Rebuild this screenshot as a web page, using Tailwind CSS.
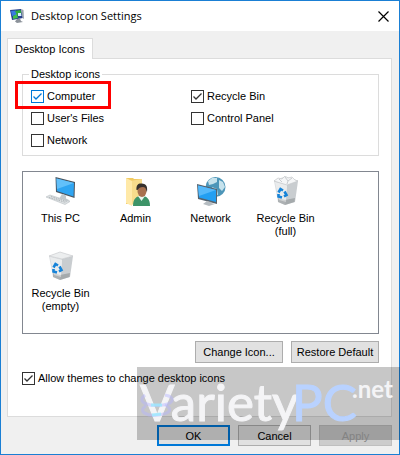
<!DOCTYPE html>
<html lang="en">
  <head>
    <meta charset="UTF-8" />
    <meta name="viewport" content="width=device-width, initial-scale=1" />
    <title>Desktop Icon Settings</title>
    <script src="https://cdn.jsdelivr.net/npm/@tailwindcss/browser@4"></script>
  </head>
  <body class="font-['Liberation_Sans',Arial,sans-serif] text-[11px] leading-[14px] text-black">
    <svg class="hidden">
      <symbol id="bin" viewBox="0 0 32 32">
        <path d="M4 5 17 8 15 29 8 26z" fill="#dcdfe1" />
        <path d="M17 8 28 5 25 26 15 29z" fill="#c9cdd0" />
        <path d="M4 5 15 1 28 5 17 8z" fill="#eceeef" stroke="#c2c5c8" stroke-width=".6" />
        <path d="M8 22 15 24 25 22 24.500 26 15 29 8 26z" fill="#8e9295" opacity=".6" />
        <path d="M5 6 17 9 16 26 9 24z" fill="#fff" opacity=".4" />
        <g fill="none" stroke="#1683d8" stroke-width="2.600">
          <path d="M8.500 16.500 10.500 13 13 14.500" />
          <path d="M14.500 15.500 16.500 19 14 20.500" />
          <path d="M12 21.500 8.500 20.500 8.500 18" />
        </g>
      </symbol>
      <symbol id="tick" viewBox="0 0 13 13">
        <path d="M2.500 6.500 5 9 10.500 3.500" fill="none" stroke="currentColor" stroke-width="1.300" />
      </symbol>
    </svg>

    <div class="relative min-h-screen flex flex-col border border-[#1a7fd4] bg-[#f0f0f0]">
      <!-- title bar -->
      <header class="h-[30px] flex items-center bg-white pl-2 pr-2">
        <svg class="size-4 shrink-0" viewBox="0 0 16 16">
          <path d="M1 2 12 1 14 10 3 12z" fill="#27418c" />
          <path d="M2 3 7 2.500 8 7 3 8z" fill="#3a7be0" />
          <path d="M6 3 11.500 2 12.500 6 8 7z" fill="#2fae3c" />
          <path d="M4 8 8 6 9 10 4 11z" fill="#3fc04b" />
          <path d="M9 5 12 5 12.500 8 9 8z" fill="#d9f2ff" />
          <path d="M12 1 14.500 2 15 11 13.500 10z" fill="#9aa2ad" />
          <path d="M8 11 11 10.500 12 13 14 14 8 15 6 13.500z" fill="#8c929a" />
        </svg>
        <h1 class="ml-[6px] flex-1 font-['Open_Sans',sans-serif] text-[11px]">Desktop Icon Settings</h1>
        <button aria-label="Close" class="size-4 grid place-items-center">
          <svg class="size-[11px]" viewBox="0 0 11 11"><path d="M.5.5l10 10M10.500.5l-10 10" stroke="#000" stroke-width="1.200" /></svg>
        </button>
      </header>

      <main class="flex-1 flex flex-col px-[6px] pt-[7px]">
        <div role="tablist" class="flex">
          <button role="tab" aria-selected="true" class="relative z-10 -mb-px h-[21px] px-[7px] border border-b-0 border-[#dcdcdc] bg-white">Desktop Icons</button>
        </div>

        <section class="flex-1 mr-px border border-[#dcdcdc] bg-white pl-[14px] pr-3 pt-2">
          <fieldset class="h-[89px] border border-[#dcdcdc] px-2">
            <legend class="-ml-[2px] px-[2px]">Desktop icons</legend>
            <div class="grid grid-cols-[160px_1fr] gap-y-2 pt-2">
              <label class="relative flex items-center gap-[3px] justify-self-start">
                <span class="grid"><input type="checkbox" checked class="peer appearance-none size-[13px] border border-[#0078d7] bg-white col-start-1 row-start-1" /><svg class="hidden peer-checked:block size-[13px] text-[#0078d7] col-start-1 row-start-1 pointer-events-none"><use href="#tick" /></svg></span>
                Computer
                <span class="absolute -left-4 -top-2 w-24 h-7 border-3 border-[#ff0000] pointer-events-none"></span>
              </label>
              <label class="flex items-center gap-[3px]">
                <span class="grid"><input type="checkbox" checked class="peer appearance-none size-[13px] border border-[#333] bg-white col-start-1 row-start-1" /><svg class="hidden peer-checked:block size-[13px] text-[#333] col-start-1 row-start-1 pointer-events-none"><use href="#tick" /></svg></span>
                Recycle Bin
              </label>
              <label class="flex items-center gap-[3px]">
                <span class="grid"><input type="checkbox" class="peer appearance-none size-[13px] border border-[#333] bg-white col-start-1 row-start-1" /><svg class="hidden peer-checked:block size-[13px] text-[#333] col-start-1 row-start-1 pointer-events-none"><use href="#tick" /></svg></span>
                User's Files
              </label>
              <label class="flex items-center gap-[3px]">
                <span class="grid"><input type="checkbox" class="peer appearance-none size-[13px] border border-[#333] bg-white col-start-1 row-start-1" /><svg class="hidden peer-checked:block size-[13px] text-[#333] col-start-1 row-start-1 pointer-events-none"><use href="#tick" /></svg></span>
                Control Panel
              </label>
              <label class="flex items-center gap-[3px]">
                <span class="grid"><input type="checkbox" class="peer appearance-none size-[13px] border border-[#333] bg-white col-start-1 row-start-1" /><svg class="hidden peer-checked:block size-[13px] text-[#333] col-start-1 row-start-1 pointer-events-none"><use href="#tick" /></svg></span>
                Network
              </label>
            </div>
          </fieldset>

          <!-- icon list -->
          <ul class="mt-[15px] h-[163px] border border-[#828790] grid grid-cols-[repeat(auto-fill,75px)] auto-rows-[75px] content-start pt-1 text-center leading-[13px]">
            <li class="flex flex-col items-center gap-1">
              <svg class="size-8 shrink-0" viewBox="0 0 32 32">
                <path d="M10.500 1 30 6 29.500 22 11 16z" fill="#4b5660" />
                <path d="M11.500 2.500 29 7 28.500 20.500 12 15z" fill="#2fa5f2" />
                <path d="M11.500 2.500 29 7 12 13z" fill="#62c0fa" />
                <path d="M17 18 21 19.500 21 22.500 25 24.500 19 25.500 14 23z" fill="#c3c9cd" />
                <path d="M1 21 5 19 25 25.500 20 28.500z" fill="#dde1e3" stroke="#b9bfc3" stroke-width=".6" />
                <path d="M4 21.500 21 26.500M6 20.500 22 25.500" stroke="#9fa6ab" stroke-width=".7" stroke-dasharray="1.500 1" />
              </svg>
              This PC
            </li>
            <li class="flex flex-col items-center gap-1">
              <svg class="size-8 shrink-0" viewBox="0 0 32 32">
                <path d="M6 2 13 2 14 3 22 3 22 28 6 28z" fill="#f1ca62" />
                <path d="M10 5 22 3 22 27 10 29z" fill="#f7dc8c" />
                <path d="M6 2 12 5 12 30 6 27z" fill="#ffe9a8" />
                <path d="M13 30C13 23 16 20 21.500 20S30 23 30 30z" fill="#3d9468" />
                <path d="M18 20 21.500 25 25 20z" fill="#e9f5ee" />
                <ellipse cx="22" cy="15" rx="4.500" ry="6" fill="#a8714f" />
                <path d="M16.500 14C16 8 19 7 22 7.500S28 9 27 16C26 14 26 11 23 11S19 12 17.500 14z" fill="#35302d" />
              </svg>
              Admin
            </li>
            <li class="flex flex-col items-center gap-1">
              <svg class="size-8 shrink-0" viewBox="0 0 32 32">
                <circle cx="20.500" cy="11" r="10" fill="#4c95b8" />
                <path d="M13 5 17 2 22 2 22 6 18 8 14 9zM24 4 28 6 30 11 27 15 24 12zM17 11 22 13 23 19 19 18z" fill="#c6e2ec" />
                <path d="M2 8 22 13 22 28 3 23z" fill="#56636e" />
                <path d="M3 9.500 21 14 21 26 4 21.500z" fill="#229ff2" />
                <path d="M3 9.500 21 14 4 20z" fill="#55b9fa" />
                <path d="M12 25 16 26 16 27 20 28 14 30 8 28z" fill="#b5bcc1" />
              </svg>
              Network
            </li>
            <li class="flex flex-col items-center gap-1">
              <svg class="size-8 shrink-0" viewBox="0 0 32 32">
                <use href="#bin" />
                <path d="M4 5 8 2 12 3 15 0 18 2 22 1 25 4 28 5 17 9z" fill="#f5f6f7" stroke="#c5c9cc" stroke-width=".7" />
                <path d="M9 3 12 6M15 1 18 5 22 2M18 5 17 8" fill="none" stroke="#b4b9bd" stroke-width=".7" />
              </svg>
              <span>Recycle Bin<br />(full)</span>
            </li>
            <li class="flex flex-col items-center gap-1">
              <svg class="size-8 shrink-0" viewBox="0 0 32 32"><use href="#bin" /></svg>
              <span>Recycle Bin<br />(empty)</span>
            </li>
          </ul>

          <div class="mt-[7px] flex justify-end gap-2 pb-2">
            <button class="w-[88px] h-[22px] border border-[#adadad] bg-[#e1e1e1]">Change Icon...</button>
            <button class="w-[88px] h-[22px] border border-[#adadad] bg-[#e1e1e1]">Restore Default</button>
          </div>
          <label class="relative z-20 flex items-center gap-[3px]">
            <span class="grid"><input type="checkbox" checked class="peer appearance-none size-[13px] border border-[#333] bg-white col-start-1 row-start-1" /><svg class="hidden peer-checked:block size-[13px] text-[#333] col-start-1 row-start-1 pointer-events-none"><use href="#tick" /></svg></span>
            Allow themes to change desktop icons
          </label>
        </section>
      </main>

      <footer class="flex justify-end gap-2 px-[7px] py-2">
        <button class="w-[73px] h-[21px] border-2 border-[#0078d7] bg-[#e1e1e1]"><span class="relative z-20">OK</span></button>
        <button class="w-[73px] h-[21px] border border-[#adadad] bg-[#e1e1e1]"><span class="relative z-20">Cancel</span></button>
        <button disabled class="w-[73px] h-[21px] border border-[#bfbfbf] bg-[#cccccc] text-[#838383]"><span class="relative z-20">Apply</span></button>
      </footer>

      <!-- watermark -->
      <div class="absolute z-10 -right-px bottom-[14px] w-[263px] h-[73px] bg-black/22 pointer-events-none overflow-hidden">
        <svg class="size-full font-['Lato',sans-serif]" viewBox="0 0 263 73">
          <text x="3" y="54" font-size="51" fill="#f4f4f6" stroke="#f4f4f6" stroke-width="1">Variety</text>
          <text x="155" y="54" font-size="51" fill="#b9d2ff" stroke="#b9d2ff" stroke-width="1">PC</text>
          <text x="215" y="31" font-size="24" font-weight="700" fill="#f4f4f6">.net</text>
          <g fill="none" stroke-width="3">
            <path d="M8 28C-2 36 14 40 26 38S38 30 28 28" stroke="#b4b4ff" stroke-opacity=".45" />
            <path d="M9 39C0 44 10 50 22 48S36 42 28 38" stroke="#b4b4ff" stroke-opacity=".45" />
            <path d="M14 38 25 38M15 48 24 47" stroke="#9beaff" stroke-opacity=".8" />
          </g>
        </svg>
      </div>
    </div>
  </body>
</html>
